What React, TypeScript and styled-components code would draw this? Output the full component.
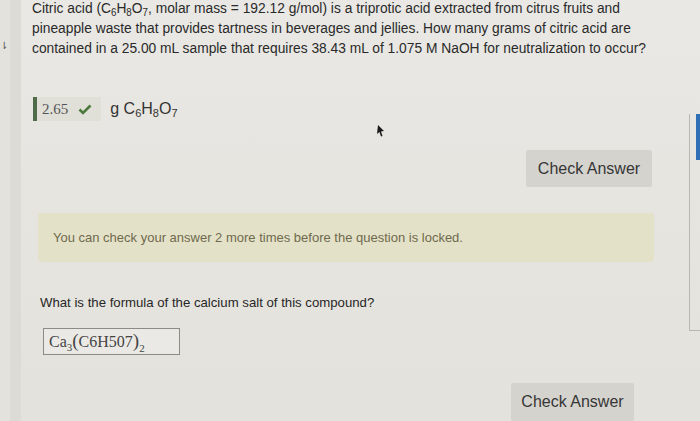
import styled, { createGlobalStyle } from "styled-components";

const GlobalStyle = createGlobalStyle`
  html, body {
    margin: 0;
    padding: 0;
    background: #e6e4df;
  }
  body {
    font-family: "Liberation Sans", Arial, sans-serif;
    color: #2b2b2b;
  }
`;

const Page = styled.div`
  position: relative;
  display: flex;
  width: 700px;
  height: 421px;
  overflow: hidden;
  background: linear-gradient(180deg, #e9e8e4 0%, #e6e4df 55%, #e4e2dd 100%);
`;

const LeftRail = styled.div`
  width: 10px;
  flex-shrink: 0;
  padding-top: 40px;
  font-size: 10px;
  color: #555;
  border-right: 11px solid #dddbd5;
  background: #e4e2dc;
`;

const Main = styled.div`
  width: 666px;
  min-width: 0;
  flex-shrink: 0;
  display: flex;
  flex-direction: column;
  padding-left: 11px;
  box-sizing: border-box;
`;

const SideRail = styled.div`
  flex: 1;
`;

const SideBox = styled.div`
  margin-top: 114px;
  margin-left: 2px;
  height: 216px;
  border-left: 1px solid #b9b7b1;
  border-bottom: 1px solid #b9b7b1;
`;

const BlueMark = styled.div`
  margin-left: 6px;
  width: 4px;
  height: 46px;
  background: #2f6fb5;
`;

const Prompt = styled.div`
  font-size: 15.5px;
  line-height: 20px;
  color: #2a2a2a;
  margin-top: -2px;
  transform: scaleX(0.89);
  transform-origin: left top;
`;

const Line = styled.div`
  white-space: nowrap;
`;

const AnswerRow = styled.div`
  display: flex;
  align-items: center;
  margin-top: 39px;
  height: 24px;
`;

const AnswerBox = styled.div`
  display: flex;
  align-items: center;
  gap: 10px;
  height: 24px;
  padding: 0 9px 0 5px;
  margin-left: 1px;
  border-left: 4px solid #4e6b4a;
  background: #e0dfd8;
`;

const AnswerValue = styled.span`
  font-family: "Liberation Serif", "Times New Roman", serif;
  font-size: 15px;
  color: #555;
`;

const Unit = styled.span`
  margin-left: 9px;
  font-size: 16px;
  color: #333;
`;

const Sub = styled.sub<{ $drop?: number }>`
  font-size: 11px;
  vertical-align: ${(p) => -(p.$drop ?? 3)}px;
  line-height: 0;
`;

const ButtonRow = styled.div<{ $top: number; $right: number }>`
  display: flex;
  justify-content: flex-end;
  margin-top: ${(p) => p.$top}px;
  padding-right: ${(p) => p.$right}px;
`;

const CheckButton = styled.button<{ $w: number; $h: number }>`
  width: ${(p) => p.$w}px;
  height: ${(p) => p.$h}px;
  flex-shrink: 0;
  border: none;
  border-radius: 2px;
  background: #d4d3ce;
  color: #363636;
  font-family: "Liberation Sans", Arial, sans-serif;
  font-size: 16px;
  padding: 0;
`;

const Notice = styled.div`
  display: flex;
  align-items: center;
  margin: 26px 33px 0 6px;
  height: 50px;
  padding-left: 15px;
  border-radius: 3px;
  background: #e4e1c9;
  color: #6f6a4c;
  font-size: 13px;
`;

const Question = styled.div`
  margin: 33px 0 0 8px;
  font-size: 13.2px;
  color: #262626;
`;

const FormulaBox = styled.div`
  display: flex;
  align-items: center;
  width: 130px;
  height: 26px;
  margin: 18px 0 0 11px;
  padding-left: 5px;
  border: 1px solid #8d8b86;
  background: #ebe9e5;
  font-family: "Liberation Serif", "Times New Roman", serif;
  font-size: 16px;
  color: #444;
`;

const Formula = styled.span`
  white-space: nowrap;
`;

const Paren = styled.span`
  font-size: 19px;
`;

const Cursor = styled.svg`
  position: absolute;
  left: 375px;
  top: 125px;
`;

function CheckMark() {
  return (
    <svg width="14" height="11" viewBox="0 0 14 11">
      <path d="M1.5 5.5 L5 9 L12.5 1.5" fill="none" stroke="#4c7a3c" strokeWidth="2.6" />
    </svg>
  );
}

export default function App() {
  return (
    <>
      <GlobalStyle />
      <Page>
        <LeftRail>⇂</LeftRail>
        <Main>
          <Prompt>
            <Line>
              Citric acid (C<Sub>6</Sub>H<Sub>8</Sub>O<Sub>7</Sub>, molar mass = 192.12 g/mol) is a triprotic acid extracted from citrus fruits and
            </Line>
            <Line>
              pineapple waste that provides tartness in beverages and jellies. How many grams of citric acid are
            </Line>
            <Line>
              contained in a 25.00 mL sample that requires 38.43 mL of 1.075 M NaOH for neutralization to occur?
            </Line>
          </Prompt>

          <AnswerRow>
            <AnswerBox>
              <AnswerValue>2.65</AnswerValue>
              <CheckMark />
            </AnswerBox>
            <Unit>
              g C<Sub>6</Sub>H<Sub>8</Sub>O<Sub>7</Sub>
            </Unit>
          </AnswerRow>

          <ButtonRow $top={29} $right={35}>
            <CheckButton $w={126} $h={37}>Check Answer</CheckButton>
          </ButtonRow>

          <Notice>You can check your answer 2 more times before the question is locked.</Notice>

          <Question>What is the formula of the calcium salt of this compound?</Question>

          <FormulaBox>
            <Formula>
              Ca<Sub $drop={4}>3</Sub>
              <Paren>(</Paren>C6H507<Paren>)</Paren>
              <Sub $drop={5}>2</Sub>
            </Formula>
          </FormulaBox>

          <ButtonRow $top={28} $right={53}>
            <CheckButton $w={123} $h={38}>Check Answer</CheckButton>
          </ButtonRow>
        </Main>
        <SideRail>
          <SideBox>
            <BlueMark />
          </SideBox>
        </SideRail>
        <Cursor width="10" height="12" viewBox="0 0 10 12">
          <path d="M3 0 L9 6 L6 6.5 L7.5 11 L6 11.5 L4.5 7 L2 9 Z" fill="#1a1a1a" />
        </Cursor>
      </Page>
    </>
  );
}
